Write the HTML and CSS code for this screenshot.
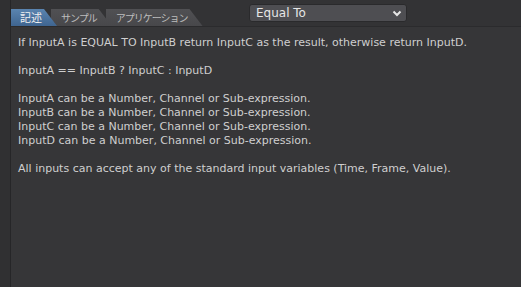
FILE: index.html
```html
<!DOCTYPE html>
<html lang="ja">
<head>
    <meta charset="UTF-8">
    <title>Equal To</title>
    <link rel="stylesheet" href="styles.css">
</head>
<body>
    <div class="app">
        <div class="side"></div>
        <div class="main">
            <div class="topbar">
                <div class="tabs">
                    <div class="tab active">記述</div>
                    <div class="tab kana">サンプル</div>
                    <div class="tab kana">アプリケーション</div>
                </div>
                <div class="select">
                    <span>Equal To</span>
                    <svg width="10" height="7" viewBox="0 0 10 7"><path d="M1.5 1.5 L5 5 L8.5 1.5" fill="none" stroke="#e6e6e6" stroke-width="2"/></svg>
                </div>
            </div>
            <div class="content">
                <p>If InputA is EQUAL TO InputB return InputC as the result, otherwise return InputD.</p>
                <p>InputA == InputB ? InputC : InputD</p>
                <p>InputA can be a Number, Channel or Sub-expression.<br>
                InputB can be a Number, Channel or Sub-expression.<br>
                InputC can be a Number, Channel or Sub-expression.<br>
                InputD can be a Number, Channel or Sub-expression.</p>
                <p>All inputs can accept any of the standard input variables (Time, Frame, Value).</p>
            </div>
        </div>
    </div>
</body>
</html>
```

FILE: styles.css
```css
body {
    margin: 0;
    background-color: #363638;
    font-family: 'DejaVu Sans', 'Noto Sans CJK JP', sans-serif;
    color: #cfcfcf;
}
.app {
    display: flex;
    height: 287px;
}
.side {
    width: 10px;
    background-color: #303032;
    border-right: 1px solid #262628;
}
.main {
    flex: 1;
    display: flex;
    flex-direction: column;
}
.topbar {
    height: 26px;
    display: flex;
    align-items: flex-start;
    background-color: #333335;
    border-bottom: 1px solid #2b2b2d;
}
.tabs {
    display: flex;
    width: 238px;
    margin-top: 9px;
}
.tab {
    height: 17px;
    line-height: 17px;
    font-family: 'Noto Sans CJK JP', sans-serif;
    font-size: 11px;
    color: #bdbdbd;
    background: linear-gradient(#505053, #48484b);
    padding: 0 15px 0 9px;
    margin-right: -6px;
    clip-path: polygon(0 0, calc(100% - 13px) 0, 100% 100%, 0 100%);
}
.tab.kana {
    font-size: 10px;
    letter-spacing: -1px;
    padding-left: 10px;
}
.tab.active {
    position: relative;
    z-index: 1;
    color: #f0f0f0;
    background: linear-gradient(#5a84b0, #3f6590);
}
.select {
    margin-top: 4px;
    width: 158px;
    height: 18px;
    box-sizing: border-box;
    display: flex;
    align-items: center;
    justify-content: space-between;
    padding: 0 4px 0 6px;
    background-color: #4e4e52;
    border: 1px solid #2a2a2c;
    border-radius: 3px;
    font-size: 12px;
    color: #e6e6e6;
}
.content {
    padding: 9px 7px;
    font-size: 11px;
    line-height: 14px;
}
.content p {
    margin: 0 0 14px;
}
```
